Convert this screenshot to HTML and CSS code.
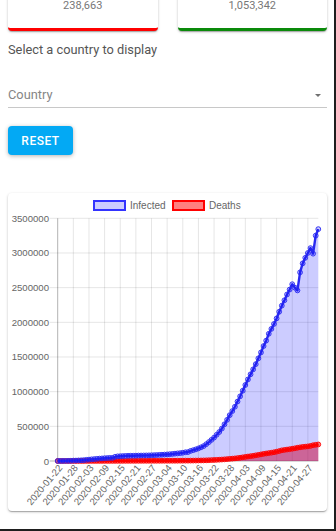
FILE: index.html
```html
<!DOCTYPE html>
<html lang="en">
  <head>
    <meta charset="UTF-8" />
    <meta name="viewport" content="width=device-width, initial-scale=1.0" />
    <title>COVID-19 Tracker</title>
    <link rel="stylesheet" href="styles.css">
  </head>
  <body>
    <div class="page">
      <h1 class="title">COVID-19 Tracker</h1>
      <div class="stats" id="stats">
        <div class="stat deaths">
          <div class="stat-title">Deaths</div>
          <div class="stat-value">238,663</div>
        </div>
        <div class="stat recovered">
          <div class="stat-title">Recovered</div>
          <div class="stat-value">1,053,342</div>
        </div>
      </div>

      <div class="label">Select a country to display</div>
      <div class="select">
        <span>Country</span>
        <span class="arrow"></span>
      </div>

      <button class="reset" type="button">Reset</button>

      <div class="chart-card">
        <svg id="chart" width="317" height="318" viewBox="0 0 317 318">
          <g class="legend">
            <rect class="box-infected" x="86" y="8" width="31" height="9" />
            <text class="legend-text" x="122" y="12.5">Infected</text>
            <rect class="box-deaths" x="165" y="8" width="31" height="9" />
            <text class="legend-text" x="201" y="12.5">Deaths</text>
          </g>
        </svg>
      </div>
    </div>

    <script>
      (() => {
        const infected = [
          555, 654, 941, 1434, 2118, 2927, 5578, 6166, 8234, 9927,
          12038, 16787, 19881, 23892, 27635, 30794, 34391, 37120, 40150, 42762,
          44802, 45221, 60368, 66885, 69030, 71224, 73258, 75136, 75639, 76197,
          76819, 78572, 78958, 79561, 80406, 81388, 82746, 84112, 86011,
          88369, 90306, 92840, 95120, 97886, 101801, 105847, 109821, 113590, 118620,
          125875, 128352, 145205, 156101, 167454, 181574, 197102, 214821, 242570, 272208,
          304507, 336953, 378235, 418045, 467653, 529591, 593291, 660693, 720140, 782389, 857487,
          932605, 1013466, 1095917, 1176060, 1249754, 1321481, 1396476, 1480202, 1565278, 1657526,
          1735650, 1834721, 1904838, 1976191, 2056054, 2152437, 2240190, 2317758, 2401378, 2472259,
          2549294, 2500000, 2460000, 2720000, 2850000, 2930000, 3000000, 3070000, 2990000, 3250000,
          3343777
        ];
        const deaths = [
          17, 18, 26, 42, 56, 82, 131, 133, 171, 213,
          259, 362, 426, 492, 564, 634, 719, 806, 906, 1013,
          1113, 1118, 1371, 1523, 1666, 1770, 1868, 2007, 2122, 2247,
          2251, 2458, 2469, 2629, 2708, 2770, 2814, 2872, 2941,
          2996, 3085, 3160, 3254, 3348, 3460, 3558, 3802, 3988, 4262,
          4615, 4720, 5404, 5819, 6440, 7126, 7905, 8733, 9867, 11299,
          12973, 14623, 16497, 18615, 21181, 23970, 27198, 30652, 33925, 37582, 42107,
          46809, 52983, 58787, 64606, 69374, 74565, 81865, 88338, 95455, 102525,
          108503, 114090, 119481, 125983, 134176, 143800, 153822, 159510, 165044, 169986,
          176583, 183027, 190858, 197159, 202846, 206544, 211167, 217153, 227638, 233388,
          238663
        ];

        const NS = "http://www.w3.org/2000/svg";
        const svg = document.getElementById("chart");
        const xMin = 49.7, xMax = 310.3, yMin = 25.3, yMax = 268, max = 3500000;
        const step = (xMax - xMin) / (infected.length - 1);
        const xAt = (i) => xMin + i * step;
        const yAt = (v) => yMax - (v / max) * (yMax - yMin);

        const el = (tag, attrs, text) => {
          const node = document.createElementNS(NS, tag);
          for (const k in attrs) node.setAttribute(k, attrs[k]);
          if (text) node.textContent = text;
          svg.appendChild(node);
          return node;
        };

        // grid + y axis
        for (let v = 0; v <= max; v += 500000) {
          const y = yAt(v);
          el("line", { x1: xMin - 8, x2: xMax, y1: y, y2: y, class: v === 0 ? "axis" : "grid" });
          el("text", { x: xMin - 8.7, y: y, class: "tick y-tick" }, String(v));
        }

        // vertical grid + dates
        const start = Date.UTC(2020, 0, 22);
        for (let i = 0; i < infected.length; i += 6) {
          const x = xAt(i);
          el("line", { x1: x, x2: x, y1: yMin, y2: yMax, class: i === 0 ? "axis" : "grid" });
          const d = new Date(start + i * 86400000).toISOString().slice(0, 10);
          el("text", { class: "tick x-tick", transform: `translate(${x + 2.5} ${yMax + 5}) rotate(-50)` }, d);
        }

        const linePath = (data) =>
          data.map((v, i) => (i ? "L" : "M") + xAt(i).toFixed(2) + " " + yAt(v).toFixed(2)).join(" ");
        const areaPath = (data) => linePath(data) + ` L${xMax} ${yMax} L${xMin} ${yMax} Z`;

        // fills first (last dataset first), then lines + points
        el("path", { d: areaPath(deaths), class: "area-deaths" });
        el("path", { d: areaPath(infected), class: "area-infected" });

        [[deaths, "deaths"], [infected, "infected"]].forEach(([data, name]) => {
          el("path", { d: linePath(data), class: "line-" + name });
          data.forEach((v, i) => el("circle", { cx: xAt(i), cy: yAt(v), r: 2.4, class: "point-" + name }));
        });

        // page is shown scrolled down a bit
        const stats = document.getElementById("stats");
        window.scrollTo(0, stats.offsetTop + 40);
      })();
    </script>
  </body>
</html>
```

FILE: styles.css
```css
* {
  box-sizing: border-box;
}

html,
body {
  margin: 0;
  background: #ffffff;
}

body {
  font-family: Roboto, "Liberation Sans", sans-serif;
  color: rgba(0, 0, 0, 0.87);
}

/* dark window frame on the right and bottom */
body::after {
  content: "";
  position: fixed;
  top: 0;
  left: 0;
  right: 0;
  bottom: 0;
  border-right: 2px solid #1e1e1e;
  border-bottom: 2px solid #1e1e1e;
  pointer-events: none;
}

.page {
  padding: 16px 9px 30px 8px;
}

.title {
  font-size: 20px;
  font-weight: 500;
  margin: 0 0 16px;
}

.stats {
  display: grid;
  grid-template-columns: 1fr 1fr;
  column-gap: 20px;
}

.stat {
  background: #ffffff;
  padding: 12px 8px;
  text-align: center;
  border-radius: 4px;
  box-shadow: 0 1px 3px rgba(0, 0, 0, 0.2), 0 1px 1px rgba(0, 0, 0, 0.14),
    0 2px 1px -1px rgba(0, 0, 0, 0.12);
}
.stat.deaths {
  border-bottom: 3px solid #ff0000;
}
.stat.recovered {
  border-bottom: 3px solid #0a8a0a;
}
.stat-title {
  font-size: 13px;
  line-height: 24px;
  color: #333333;
}
.stat-value {
  font-size: 11px;
  line-height: 20px;
  color: #777777;
}

.label {
  margin-top: 9px;
  font-size: 12.8px;
  line-height: 20px;
  color: #555555;
}

.select {
  margin-top: 16px;
  padding: 9px 0 2px;
  display: flex;
  justify-content: space-between;
  align-items: center;
  font-size: 12.8px;
  line-height: 20px;
  color: #868686;
  border-bottom: 1px solid #c8c8c8;
}
.arrow {
  width: 0;
  height: 0;
  margin-right: 6px;
  border-left: 3.5px solid transparent;
  border-right: 3.5px solid transparent;
  border-top: 3.5px solid #707070;
}

.reset {
  display: block;
  margin-top: 18px;
  width: 65px;
  height: 29px;
  padding: 0;
  border: 0;
  border-radius: 4px;
  background: #03a9f4;
  color: #ffffff;
  font-family: Roboto, sans-serif;
  font-size: 12px;
  font-weight: 500;
  letter-spacing: 0.5px;
  text-transform: uppercase;
  box-shadow: 0 1px 4px rgba(0, 0, 0, 0.3);
}

.chart-card {
  margin-top: 38px;
  height: 318px;
  background: #ffffff;
  border-radius: 4px;
  box-shadow: 0 1px 3px rgba(0, 0, 0, 0.2), 0 1px 1px rgba(0, 0, 0, 0.14),
    0 2px 1px -1px rgba(0, 0, 0, 0.12);
}
#chart {
  display: block;
}

/* chart parts */
.legend-text,
.tick {
  font-family: "Liberation Sans", Arial, sans-serif;
  fill: #666666;
  dominant-baseline: central;
}
.legend-text {
  font-size: 10px;
}
.tick {
  font-size: 9.6px;
}
.y-tick,
.x-tick {
  text-anchor: end;
}
.box-infected {
  fill: rgba(0, 0, 255, 0.2);
  stroke: #3333ff;
  stroke-width: 2;
}
.box-deaths {
  fill: rgba(255, 0, 0, 0.5);
  stroke: #ff0000;
  stroke-width: 2;
}
.grid {
  stroke: rgba(0, 0, 0, 0.1);
  stroke-width: 1;
}
.axis {
  stroke: rgba(0, 0, 0, 0.3);
  stroke-width: 1;
}
.area-infected {
  fill: rgba(0, 0, 255, 0.2);
}
.area-deaths {
  fill: rgba(255, 0, 0, 0.5);
}
.line-infected,
.line-deaths {
  fill: none;
  stroke-width: 2.4;
  stroke-linejoin: round;
}
.line-infected {
  stroke: #2828f0;
}
.line-deaths {
  stroke: #ff0000;
}
.point-infected {
  fill: rgba(0, 0, 255, 0.2);
  stroke: #2828f0;
  stroke-width: 0.9;
}
.point-deaths {
  fill: rgba(255, 0, 0, 0.5);
  stroke: #ff0000;
  stroke-width: 0.9;
}
```
